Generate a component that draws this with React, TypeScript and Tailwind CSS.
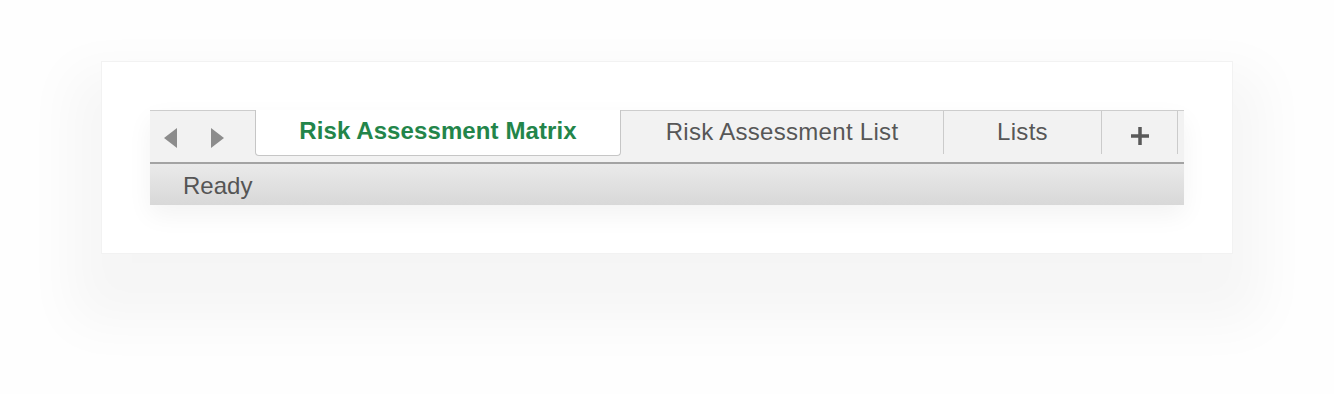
import React from "react";

const tabs = [
  { label: "Risk Assessment List", width: "w-[323px]" },
  { label: "Lists", width: "w-[158px]" },
];

const App = () => {
  return (
    <div
      className="w-full h-[394px] bg-[#fefefe] pt-[61px] pl-[101px]"
      style={{ fontFamily: '"Liberation Sans", Arial, sans-serif' }}
    >
      <div className="w-[1132px] h-[193px] bg-white border border-[#f2f2f2] shadow-[0_40px_50px_30px_rgba(0,0,0,0.035)] pt-[48px] pl-[48px]">
        <div className="w-[1034px] shadow-[0_10px_24px_rgba(0,0,0,0.05)]">
          {/* tab row */}
          <div className="flex items-start h-[52px] bg-[#f2f2f2] border-t border-[#cdcdcd]">
            <div className="w-[105px] h-full flex items-center gap-[32px] pl-[14px] pt-[2px]">
              <svg width="14" height="20" viewBox="0 0 14 20">
                <path d="M13 0 L13 20 L0 10 Z" fill="#8c8c8c" />
              </svg>
              <svg width="14" height="20" viewBox="0 0 14 20">
                <path d="M1 0 L1 20 L14 10 Z" fill="#8c8c8c" />
              </svg>
            </div>
            <div className="w-[366px] h-[46px] -mt-px bg-white border-x border-b border-[#c6c6c6] rounded-b-[4px] flex items-center justify-center pb-[4px]">
              <span className="text-[24px] font-bold text-[#23854a] tracking-[0.1px]">Risk Assessment Matrix</span>
            </div>
            {tabs.map((t) => (
              <div
                key={t.label}
                className={`${t.width} h-[43px] border-r border-[#cbcbcb] flex items-center justify-center pb-[2px]`}
              >
                <span className="text-[24px] text-[#575757] tracking-[0.3px]">{t.label}</span>
              </div>
            ))}
            <div className="w-[76px] h-[43px] border-r border-[#cbcbcb] flex items-center justify-center pt-[6px]">
              <svg width="20" height="20" viewBox="0 0 20 20">
                <path d="M10 1 V19 M1 10 H19" stroke="#5a5a5a" strokeWidth="3.5" />
              </svg>
            </div>
          </div>
          {/* status bar */}
          <div className="h-[43px] border-t-2 border-[#a3a3a3] bg-gradient-to-b from-[#eaeaea] to-[#d8d8d8] flex items-center pl-[33px] pt-[3px]">
            <span className="text-[24px] text-[#555555]">Ready</span>
          </div>
        </div>
      </div>
    </div>
  );
};

export default App;
